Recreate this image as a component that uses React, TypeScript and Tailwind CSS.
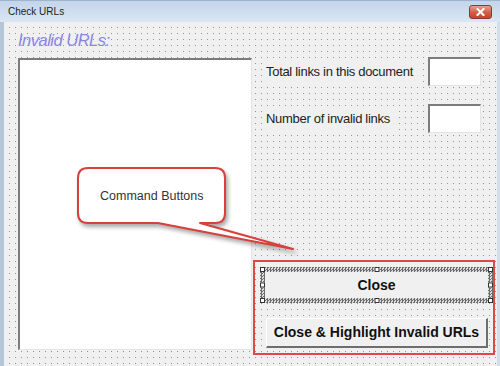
import React from 'react';

const dots =
  'bg-[#f0f0f0] bg-[image:linear-gradient(to_right,#f0f0f0_5px,transparent_5px),linear-gradient(to_bottom,#f0f0f0_5px,#939393_5px)] bg-[length:6px_6px]';

const sunken = 'bg-white border-t-2 border-l-2 border-t-[#7c7c7c] border-l-[#7c7c7c] border-b border-r border-b-[#e4e4e4] border-r-[#e4e4e4]';

const Handle: React.FC<{ className: string }> = ({ className }) => (
  <span className={`absolute w-[5px] h-[5px] bg-white border border-[#333] ${className}`} />
);

const Callout: React.FC = () => (
  <div className="absolute left-[70px] top-[160px] w-[240px] h-[100px]">
    <svg width="240" height="100" viewBox="0 0 240 100" className="drop-shadow-[2px_3px_2px_rgba(0,0,0,0.35)]">
      <path
        d="M18 8 H145 Q155 8 155 18 V53 Q155 63 145 63 H130 L223 89 L88 63 H18 Q8 63 8 53 V18 Q8 8 18 8 Z"
        fill="#ffffff"
        stroke="#d8403c"
        strokeWidth="2"
        strokeLinejoin="round"
      />
    </svg>
    <span className="absolute left-[30px] top-[30px] text-[12.5px] text-[#333] font-['Liberation_Sans',Arial,sans-serif] leading-none">
      Command Buttons
    </span>
  </div>
);

export default function App() {
  return (
    <div className="relative w-[500px] h-[366px] overflow-hidden flex flex-col bg-[#f0f0f0] font-['Liberation_Sans',Arial,sans-serif]">
      {/* title bar */}
      <div className="h-[22px] shrink-0 flex items-center justify-between pl-[8px] pr-[8px] bg-gradient-to-b from-[#c3d5ea] to-[#dae6f4] border-t border-t-[#9fb3cc]">
        <span className="text-[10px] text-[#1c1c1c] leading-none">Check URLs</span>
        <div className="w-[23px] h-[14px] rounded-[3px] border border-[#8a3a2c] bg-gradient-to-b from-[#e8a192] via-[#d2614c] to-[#c04530] flex items-center justify-center">
          <svg width="9" height="8" viewBox="0 0 9 8">
            <path d="M1.5 1 L7.5 7 M7.5 1 L1.5 7" stroke="#ffffff" strokeWidth="2" strokeLinecap="square" />
          </svg>
        </div>
      </div>

      {/* form body */}
      <div className={`flex-1 flex border-l-4 border-l-[#b6c6d9] border-r-[3px] border-r-[#d3deeb] ${dots}`}>
        <div className="ml-[14px] w-[234px] flex flex-col">
          <div className="mt-[6px] h-[24px] flex items-center">
            <span className="text-[16.5px] italic text-[#8a86e2] tracking-[-0.5px] leading-none">Invalid URLs:</span>
          </div>
          <div className={`mt-[6px] h-[292px] ${sunken}`} />
        </div>

        <div className="ml-[10px] w-[231px] flex flex-col">
          <div className="mt-[35px] h-[29px] flex items-center">
            <div className="w-[156px] h-[26px] bg-[#f0f0f0] flex items-center pl-[4px]">
              <span className="text-[13px] text-[#222] tracking-[-0.3px]">Total links in this document</span>
            </div>
            <div className={`ml-[10px] w-[53px] h-[29px] ${sunken}`} />
          </div>
          <div className="mt-[18px] h-[29px] flex items-center">
            <div className="w-[134px] h-[24px] bg-[#f0f0f0] flex items-center pl-[4px]">
              <span className="text-[13px] text-[#222] tracking-[-0.3px]">Number of invalid links</span>
            </div>
            <div className={`ml-[32px] w-[53px] h-[29px] ${sunken}`} />
          </div>

          <div className="relative -ml-[2px] mt-[134px] w-[233px] h-[36px] p-[5px] bg-[image:conic-gradient(#6c6c6c_25%,#dedede_0_50%,#6c6c6c_0_75%,#dedede_0)] bg-[length:3px_3px]">
            <div className="w-full h-full bg-[#f0f0f0] flex items-center justify-center">
              <span className="text-[14px] font-bold text-[#111]">Close</span>
            </div>
            <Handle className="left-0 top-0" />
            <Handle className="left-1/2 -translate-x-1/2 top-0" />
            <Handle className="right-0 top-0" />
            <Handle className="left-0 top-1/2 -translate-y-1/2" />
            <Handle className="right-0 top-1/2 -translate-y-1/2" />
            <Handle className="left-0 bottom-0" />
            <Handle className="left-1/2 -translate-x-1/2 bottom-0" />
            <Handle className="right-0 bottom-0" />
          </div>

          <div className="ml-[4px] mt-[15px] w-[222px] h-[30px] bg-[#f0f0f0] border-t border-l border-t-white border-l-white border-b-2 border-r-2 border-b-[#6e6e6e] border-r-[#6e6e6e] flex items-center justify-center">
            <span className="text-[14px] font-bold text-[#111]">Close &amp; Highlight Invalid URLs</span>
          </div>
        </div>
      </div>

      {/* annotation overlay */}
      <div className="absolute left-[253px] top-[260px] w-[242px] h-[95px] border-2 border-[#dc4a48] pointer-events-none" />
      <Callout />
    </div>
  );
}
